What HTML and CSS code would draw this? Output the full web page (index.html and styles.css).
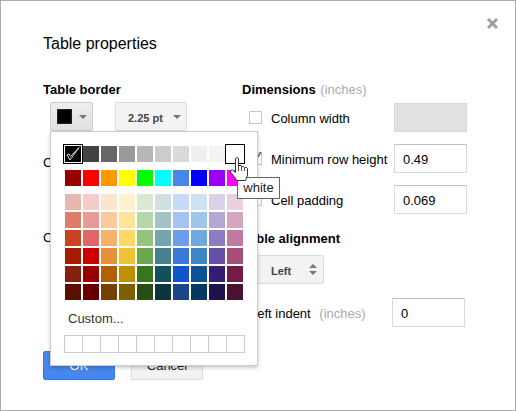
FILE: index.html
```html
<!DOCTYPE html>
<html>
<head>
    <title>Table properties</title>
    <link rel="stylesheet" href="styles.css">
</head>
<body>

<div id="dialog">
    <svg class="close" width="11" height="11" viewBox="0 0 11 11"><path d="M1 1L10 10M10 1L1 10"/></svg>

    <h1>Table properties</h1>

    <div class="columns">
        <div class="col">
            <h3>Table border</h3>
            <div class="border-controls">
                <div class="btn color-btn open"><span class="color-chip"></span><span class="arrow"></span></div>
                <div class="btn weight-btn"><span class="btn-text">2.25 pt</span><span class="arrow"></span></div>
            </div>
            <div class="left-label first">Cell background color</div>
            <div class="left-label second">Cell vertical alignment</div>
        </div>

        <div class="col">
            <h3>Dimensions <span class="hint">(inches)</span></h3>
            <div class="dim-rows">
                <div class="row">
                    <span class="checkbox"></span>
                    <label>Column width</label>
                    <input class="field" type="text" disabled>
                </div>
                <div class="row">
                    <span class="checkbox"><svg width="13" height="13" viewBox="0 0 13 13"><path d="M3 7L6 10L12 1"/></svg></span>
                    <label>Minimum row height</label>
                    <input class="field" type="text" value="0.49">
                </div>
                <div class="row">
                    <span class="checkbox"></span>
                    <label>Cell padding</label>
                    <input class="field" type="text" value="0.069">
                </div>
            </div>

            <h3 class="align-title">Table alignment</h3>
            <div class="btn align-btn"><span class="btn-text">Left</span><span class="updown"></span></div>
            <div class="row indent-row">
                <label>Left indent <span class="hint">(inches)</span></label>
                <input class="field" type="text" value="0">
            </div>
        </div>
    </div>

    <div class="footer">
        <div class="btn ok">OK</div>
        <div class="btn cancel">Cancel</div>
    </div>

    <div id="palette">
        <div id="swatches"></div>
        <div class="custom">Custom...</div>
        <div class="custom-boxes" id="customBoxes"></div>
        <svg class="selected-check" width="16" height="16" viewBox="0 0 16 16"><path d="M2 9L5 14L14 1.5L5.5 10.5L4 8Z"/></svg>
    </div>

    <div class="tooltip">white</div>

    <svg class="hand" width="20" height="26" viewBox="0 0 20 26">
        <path class="hand-fill" d="M6.5 2.5Q8 0.5 9.5 2.5V10Q11 8.5 12.5 10V11Q14.5 9.5 15.5 11.5Q17.5 10.5 18.5 12.5V19L16.5 24.5H8L1.5 16Q1 13.5 3.5 14L6.5 16.5Z"/>
        <path class="hand-line" d="M9.5 10V15M12.5 11V15M15.5 12V15"/>
    </svg>
</div>

<script src="main.js"></script>

</body>
</html>
```

FILE: styles.css
```css
* { box-sizing: border-box; }
body { margin: 0; background: #fff; font-family: 'Liberation Sans', Arial, sans-serif; font-size: 13px; color: #000; }

#dialog {
    position: relative;
    width: 516px;
    height: 411px;
    border: 1px solid #acacac;
    padding: 32px 42px 30px;
    display: flex;
    flex-direction: column;
    overflow: hidden;
}
h1 {
    margin: 0;
    font-size: 16px;
    font-weight: normal;
    line-height: 22px;
}
h3 {
    margin: 0;
    height: 16px;
    font-size: 13px;
    line-height: 18px;
}
.close {
    position: absolute;
    top: 17px;
    left: 486px;
}
.close path {
    stroke: #a0a0a0;
    stroke-width: 3;
    fill: none;
}
.hint {
    font-weight: normal;
    color: #aaa;
    margin-left: 1px;
}

.columns {
    display: grid;
    grid-template-columns: 199px 1fr;
    margin-top: 26px;
}

.btn {
    display: flex;
    align-items: center;
    height: 29px;
    border: 1px solid #dcdcdc;
    border-radius: 2px;
    background: #f3f3f3;
    color: #444;
    font-size: 11px;
    font-weight: bold;
}
.btn-text { padding-top: 2px; }
.arrow {
    width: 0;
    height: 0;
    border-style: solid;
    border-width: 4px 4px 0;
    border-color: #777 transparent transparent;
}
.border-controls {
    display: flex;
    gap: 22px;
    margin: 5px 0 0 7px;
}
.color-btn {
    width: 43px;
    padding-left: 6px;
    border-color: #ccc;
    background: linear-gradient(#eee, #e0e0e0);
}
.color-chip {
    width: 15px;
    height: 15px;
    background: #000;
    border: 1px solid #222;
    margin-right: 7px;
}
.weight-btn {
    width: 72px;
    padding-left: 12px;
}
.weight-btn .arrow { margin-left: 10px; }
.left-label { height: 16px; line-height: 18px; }
.left-label.first { margin-top: 23px; }
.left-label.second { margin-top: 59px; }

.dim-rows {
    display: flex;
    flex-direction: column;
    gap: 12px;
    margin-top: 6px;
}
.row {
    display: flex;
    align-items: center;
    height: 29px;
    padding-left: 7px;
}
.checkbox {
    width: 13px;
    height: 13px;
    border: 1px solid #c6c6c6;
    margin-right: 9px;
    position: relative;
}
.checkbox svg {
    position: absolute;
    top: -2px;
    left: -1px;
}
.checkbox path {
    stroke: #666;
    stroke-width: 1.5;
    fill: none;
}
.row label { width: 123px; padding-top: 2px; }
.field {
    width: 73px;
    height: 29px;
    border: 1px solid #d9d9d9;
    border-top-color: #c0c0c0;
    padding: 2px 8px 0;
    font: inherit;
    color: #000;
    background: #fff;
}
.field:disabled {
    background: #e1e1e1;
    border-color: #d9d9d9;
}
.align-title { margin-top: 16px; }
.align-btn {
    width: 82px;
    margin-top: 9px;
    padding-left: 28px;
}
.updown {
    position: relative;
    width: 8px;
    height: 11px;
    margin-left: 18px;
}
.updown::before, .updown::after {
    content: "";
    position: absolute;
    left: 0;
    border-style: solid;
    border-color: transparent;
}
.updown::before { top: 0; border-width: 0 4px 4px; border-bottom-color: #777; }
.updown::after { bottom: 0; border-width: 4px 4px 0; border-top-color: #777; }
.indent-row {
    margin-top: 14px;
    padding-left: 8px;
}
.indent-row label { width: 142px; }
.indent-row .hint { margin-left: 5px; }

.footer {
    display: flex;
    gap: 16px;
    margin-top: auto;
}
.footer .btn {
    width: 72px;
    justify-content: center;
    font-size: 13px;
    font-weight: normal;
}
.ok {
    background: #4787ed;
    border-color: #3079ed;
    color: #fff;
}
.cancel { color: #222; }

#palette {
    position: absolute;
    top: 130px;
    left: 49px;
    width: 208px;
    height: 235px;
    padding: 14px 13px;
    background: #fff;
    border: 1px solid #ccc;
    box-shadow: 0 2px 4px rgba(0,0,0,0.2);
}
#swatches {
    display: flex;
    flex-direction: column;
    gap: 8px;
    margin-left: 1px;
}
.swatch-group {
    display: grid;
    grid-template-columns: repeat(10, 16px);
    grid-auto-rows: 16px;
    gap: 2px;
}
.swatch.selected, .swatch.hover {
    box-shadow: 0 0 0 1px #fff, 0 0 0 2px #000;
}
.selected-check {
    position: absolute;
    top: 14px;
    left: 14px;
}
.selected-check path {
    fill: none;
    stroke: #ddd;
    stroke-width: 1;
}
.custom {
    margin: 10px 0 0 4px;
    height: 16px;
    line-height: 18px;
    color: #333;
}
.custom-boxes {
    display: flex;
    margin-top: 9px;
    width: 181px;
    height: 18px;
    border: 1px solid #ccc;
    border-right: 0;
}
.custom-box {
    width: 18px;
    border-right: 1px solid #ccc;
}

.tooltip {
    position: absolute;
    top: 176px;
    left: 236px;
    width: 43px;
    height: 22px;
    border: 1px solid #666;
    background: #fff;
    line-height: 20px;
    text-align: center;
    color: #222;
}
.hand {
    position: absolute;
    top: 155px;
    left: 228px;
}
.hand-fill {
    fill: #fff;
    stroke: #333;
    stroke-width: 1;
}
.hand-line {
    fill: none;
    stroke: #555;
    stroke-width: 1;
}
```

FILE: main.js
```js
var groups = [
    ["000000","434343","666666","999999","b7b7b7","cccccc","d9d9d9","efefef","f3f3f3","ffffff"],
    ["980000","ff0000","ff9900","ffff00","00ff00","00ffff","4a86e8","0000ff","9900ff","ff00ff"],
    ["e6b8af","f4cccc","fce5cd","fff2cc","d9ead3","d0e0e3","c9daf8","cfe2f3","d9d2e9","ead1dc",
     "dd7e6b","ea9999","f9cb9c","ffe599","b6d7a8","a2c4c9","a4c2f4","9fc5e8","b4a7d6","d5a6bd",
     "cc4125","e06666","f6b26b","ffd966","93c47d","76a5af","6d9eeb","6fa8dc","8e7cc3","c27ba0",
     "a61c00","cc0000","e69138","f1c232","6aa84f","45818e","3c78d8","3d85c6","674ea7","a64d79",
     "85200c","990000","b45f06","bf9000","38761d","134f5c","1155cc","0b5394","351c75","741b47",
     "5b0f00","660000","783f04","7f6000","274e13","0c343d","1c4587","073763","20124d","4c1130"]
];

var swatches = document.getElementById("swatches");
groups.forEach(function (colors) {
    var group = document.createElement("div");
    group.className = "swatch-group";
    colors.forEach(function (c) {
        var el = document.createElement("div");
        el.className = "swatch";
        el.style.background = "#" + c;
        if (c === "000000") el.className += " selected";
        if (c === "ffffff") el.className += " hover";
        group.appendChild(el);
    });
    swatches.appendChild(group);
});

var boxes = document.getElementById("customBoxes");
for (var i = 0; i < 10; i++) {
    var box = document.createElement("div");
    box.className = "custom-box";
    boxes.appendChild(box);
}
```
